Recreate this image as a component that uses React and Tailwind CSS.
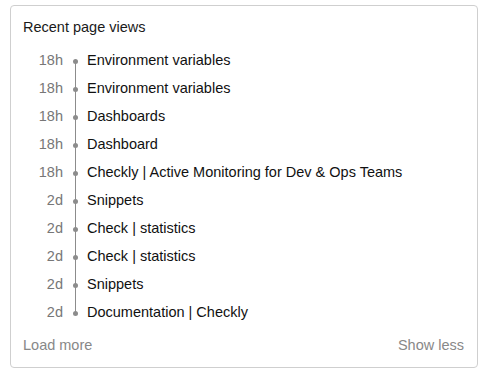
import React from "react";

const views = [
  { time: "18h", title: "Environment variables" },
  { time: "18h", title: "Environment variables" },
  { time: "18h", title: "Dashboards" },
  { time: "18h", title: "Dashboard" },
  { time: "18h", title: "Checkly | Active Monitoring for Dev & Ops Teams" },
  { time: "2d", title: "Snippets" },
  { time: "2d", title: "Check | statistics" },
  { time: "2d", title: "Check | statistics" },
  { time: "2d", title: "Snippets" },
  { time: "2d", title: "Documentation | Checkly" },
];

export default function App() {
  return (
    <div className="w-[488px] h-[376px] bg-white pt-[5px] pl-[10px] font-['Liberation_Sans',Arial,sans-serif]">
      <div className="w-[468px] h-[363px] border border-[#cfcfcf] rounded-[4px] px-[12px] pt-[11px] pb-[12px] flex flex-col">
        <h2 className="text-[14.5px] leading-[20px] text-[#1a1a1a]">Recent page views</h2>

        <div className="relative mt-[10px]">
          {/* timeline line */}
          <div className="absolute left-[52px] top-[14px] bottom-[14px] w-px bg-[#8c8c8c]" />
          {views.map((v, i) => (
            <div key={i} className="flex items-center h-[28px] text-[14.5px]">
              <span className="w-[40px] text-right text-[#777]">{v.time}</span>
              <span className="w-[24px] flex justify-center">
                <span className="relative w-[5px] h-[5px] rounded-full bg-[#8c8c8c]" />
              </span>
              <span className="text-[#111]">{v.title}</span>
            </div>
          ))}
        </div>

        <div className="flex justify-between mt-[8px] text-[14.5px] leading-[20px] text-[#888]">
          <span>Load more</span>
          <span className="mr-[1px]">Show less</span>
        </div>
      </div>
    </div>
  );
}
